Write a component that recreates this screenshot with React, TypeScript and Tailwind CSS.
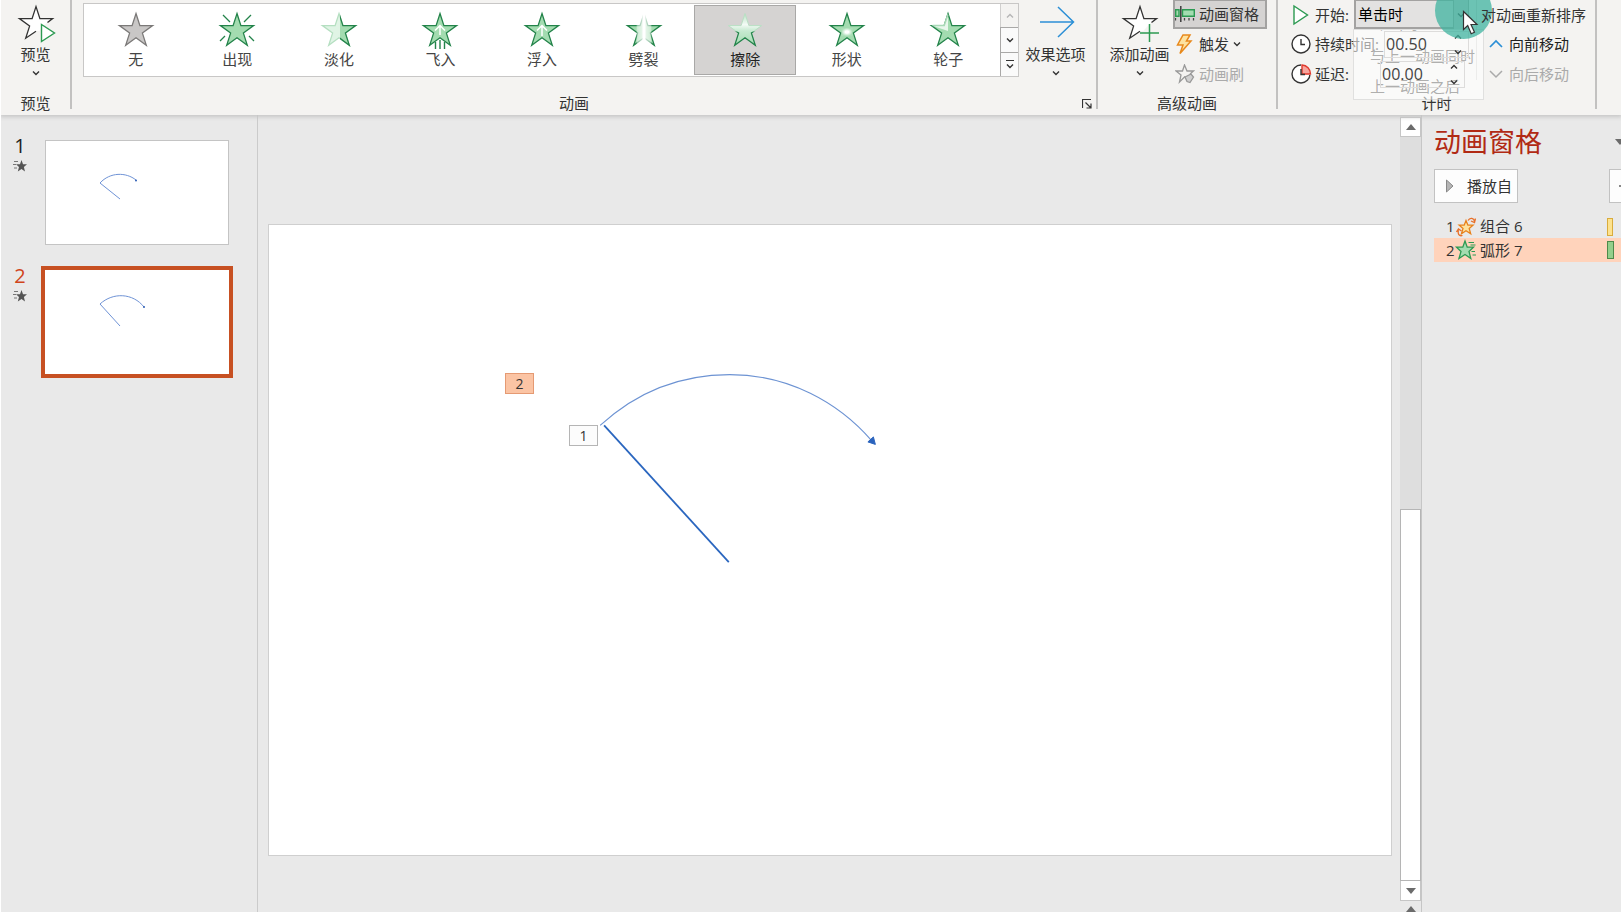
import { ReactNode, useState } from "react";

const STAR =
  "M20 2.5 23.9 14.6H36.6L26.4 22.1 30.3 34.2 20 26.7 9.7 34.2 13.6 22.1 3.4 14.6H16.1Z";

type StarKind = "none" | "appear" | "fade" | "fly" | "float" | "split" | "wipe" | "shape" | "wheel";

const effects: { kind: StarKind; label: string }[] = [
  { kind: "none", label: "无" },
  { kind: "appear", label: "出现" },
  { kind: "fade", label: "淡化" },
  { kind: "fly", label: "飞入" },
  { kind: "float", label: "浮入" },
  { kind: "split", label: "劈裂" },
  { kind: "wipe", label: "擦除" },
  { kind: "shape", label: "形状" },
  { kind: "wheel", label: "轮子" },
];

function EffectStar({ kind }: { kind: StarKind }) {
  const line = "#23834a";
  const fill = "#a3dcb0";
  const base = <path d={STAR} fill={fill} stroke={line} strokeWidth="1.3" />;
  return (
    <svg viewBox="0 0 40 40" className="h-10 w-10 shrink-0 overflow-visible" aria-hidden="true">
      <defs>
        <linearGradient id="g-split">
          <stop offset="0.3" stopColor="#fff" stopOpacity="0" />
          <stop offset="0.34" stopColor="#fff" stopOpacity="0.5" />
          <stop offset="0.44" stopColor="#fff" stopOpacity="0.7" />
          <stop offset="0.48" stopColor="#fff" />
          <stop offset="0.52" stopColor="#fff" />
          <stop offset="0.56" stopColor="#fff" stopOpacity="0.7" />
          <stop offset="0.66" stopColor="#fff" stopOpacity="0.5" />
          <stop offset="0.7" stopColor="#fff" stopOpacity="0" />
        </linearGradient>
        <linearGradient id="g-wipe" x1="0" y1="0" x2="0" y2="1">
          <stop offset="0" stopColor="#b9e3c3" />
          <stop offset="0.35" stopColor="#f4fbf6" />
          <stop offset="0.55" stopColor="#c6ead0" />
          <stop offset="1" stopColor="#a3dcb0" />
        </linearGradient>
        <radialGradient id="g-shape">
          <stop offset="0.3" stopColor="#fff" />
          <stop offset="1" stopColor="#fff" stopOpacity="0.1" />
        </radialGradient>
        <clipPath id="c-right"><path d="M21 0H40V40H21Z" /></clipPath>
        <clipPath id="c-low"><path d="M0 20.5H40V40H0Z" /></clipPath>
        <clipPath id="c-star"><path d={STAR} /></clipPath>
      </defs>
      {kind === "none" && <path d={STAR} fill="#c9c7c6" stroke="#7b7978" strokeWidth="1.3" />}
      {kind === "appear" && (
        <>
          {base}
          <path d="M6 4l7 7M34 4l-7 7M3 30l5-5M37 30l-5-5" stroke={line} strokeWidth="1.3" fill="none" />
        </>
      )}
      {kind === "fade" && (
        <>
          <path d={STAR} fill="#e0f4e5" stroke="#b5dfc1" strokeWidth="1.3" />
          <g clipPath="url(#c-right)">{base}</g>
        </>
      )}
      {kind === "fly" && (
        <>
          {base}
          <path d="M20 24V15M15 19.500l5-5 5 5" stroke="#fff" strokeWidth="1.5" fill="none" />
          <path d="M15.500 31v7M20 29v9M24.500 31v7" stroke={line} strokeWidth="1.4" />
        </>
      )}
      {kind === "float" && (
        <>
          {base}
          <path d="M20 25V15M15 19.500l5-5 5 5" stroke="#fff" strokeWidth="1.5" fill="none" />
        </>
      )}
      {kind === "split" && (
        <>
          {base}
          <path d="M0 0H40V40H0Z" fill="url(#g-split)" />
        </>
      )}
      {kind === "wipe" && (
        <>
          <path d={STAR} fill="url(#g-wipe)" stroke="#b9dfc4" strokeWidth="1" />
          <g clipPath="url(#c-low)">
            <path d={STAR} fill="none" stroke={line} strokeWidth="1.3" />
          </g>
        </>
      )}
      {kind === "shape" && (
        <>
          {base}
          <rect x="14.5" y="17" width="11" height="8" fill="url(#g-shape)" />
        </>
      )}
      {kind === "wheel" && (
        <>
          {base}
          <g clipPath="url(#c-star)">
            <path d="M20 20V0H2V14Z" fill="#e8f6ec" />
          </g>
          <path d="M20 3.500 16.200 14.600H4.500" stroke="#a9d9b7" strokeWidth="1.500" fill="none" />
        </>
      )}
    </svg>
  );
}

function Chevron({ up, className }: { up?: boolean; className?: string }) {
  return (
    <svg viewBox="0 0 8 6" className={className ?? "h-1.5 w-2 text-[#333]"} aria-hidden="true">
      <path d={up ? "M1 4.500 4 1.500 7 4.500" : "M1 1.500 4 4.500 7 1.500"} fill="none" stroke="currentColor" strokeWidth="1.4" />
    </svg>
  );
}

function Triangle({ up }: { up?: boolean }) {
  return (
    <svg viewBox="0 0 10 6" className="h-1.5 w-2.5 shrink-0" aria-hidden="true">
      <path d={up ? "M0 6 5 0 10 6Z" : "M0 0H10L5 6Z"} fill="#6b6b6b" />
    </svg>
  );
}

function OpenStar({ children }: { children: ReactNode }) {
  return (
    <svg viewBox="0 0 40 40" className="h-10 w-10 overflow-visible" aria-hidden="true">
      <path
        d="M23.500 26.700 20 26.700 9.700 34.200 13.600 22.100 3.400 14.600H16.100L20 2.500 23.900 14.600H36.600L30 19.500"
        fill="#fff"
      />
      <path
        d="M20 27.200 9.700 34.200 13.600 22.100 3.400 14.600H16.100L20 2.500 23.900 14.600H36.600L31.500 18.500"
        fill="none"
        stroke="#333"
        strokeWidth="1.300"
      />
      {children}
    </svg>
  );
}

function Group({ label, className, children }: { label: string; className: string; children: ReactNode }) {
  return (
    <section aria-label={label} className={`mb-1.5 flex flex-col border-r-2 border-[#c2c1c0] ${className}`}>
      <div className="flex h-[97px] shrink-0">{children}</div>
      <div className="flex h-3 items-center justify-center">{label}</div>
    </section>
  );
}

function Clock({ delayed }: { delayed?: boolean }) {
  return (
    <svg viewBox="0 0 22 22" className="h-[22px] w-[22px] shrink-0" aria-hidden="true">
      <circle cx="11" cy="11" r="9" fill="#fff" stroke="#333" strokeWidth="1.4" />
      {delayed && (
        <>
          <path d="M11 0H22V12H11Z" fill="#f4f3f1" />
          <path d="M12 2A9 9 0 0 1 20.500 11H12Z" fill="#f7a59e" stroke="#e03a2e" strokeWidth="1.4" />
        </>
      )}
      <path d="M11 6V11.500H15" fill="none" stroke="#333" strokeWidth="1.4" />
    </svg>
  );
}

function Spinner({ id, value, className }: { id: string; value: string; className: string }) {
  return (
    <div className={`relative z-10 flex h-[27px] items-center border border-[#dddcdb] ${className}`}>
      <input id={id} defaultValue={value} className="h-full w-full min-w-0 bg-transparent pl-px text-base text-[#444] outline-none" />
      <div className="flex h-full w-5 shrink-0 flex-col items-center justify-between py-0.5">
        <button aria-label="增加" className="flex"><Chevron up /></button>
        <button aria-label="减少" className="flex"><Chevron /></button>
      </div>
    </div>
  );
}

function SmallStar() {
  return (
    <svg viewBox="0 0 14 12" className="h-3 w-3.5 shrink-0" aria-hidden="true">
      <path d="M8.500 0 10 4.200H14L10.900 7 12 11.500 8.500 8.900 4.800 11.500 6 7 3 4.200H7Z" fill="#555" />
      <path d="M1 1.500H5M0 4.500H3M1 8H4" stroke="#777" strokeWidth="1" />
    </svg>
  );
}

function Ribbon() {
  const [selected, setSelected] = useState<StarKind>("wipe");
  return (
    <header className="relative z-10 flex h-[115px] shrink-0 bg-[#f4f3f1] text-[15px] leading-5 text-[#333] shadow-[0_1px_4px_1px_#c6c6c6]">
      <Group label="预览" className="w-[71px] shrink-0">
        <button className="flex w-full flex-col items-center self-start pt-1">
          <OpenStar>
            <path d="M25.500 20.500V37.500L38.500 29Z" fill="#fff" stroke="#2c9a52" strokeWidth="1.400" />
          </OpenStar>
          <span>预览</span>
          <span className="pt-1.5"><Chevron /></span>
        </button>
      </Group>

      <section aria-label="动画" className="relative mb-1.5 flex min-w-0 flex-1 flex-col border-r-2 border-[#c2c1c0]">
        <div className="flex h-[97px] shrink-0">
          <div className="ml-[11px] mt-[3px] flex h-[74px] min-w-0 flex-1 border border-[#c8c7c6] bg-white">
            <div className="flex min-w-0 flex-1 px-px py-px">
              {effects.map((e) => (
                <button
                  key={e.kind}
                  aria-pressed={selected === e.kind}
                  onClick={() => setSelected(e.kind)}
                  className={
                    selected === e.kind
                      ? "flex min-w-0 flex-1 flex-col items-center border border-[#a9a8a7] bg-[#d5d3d2] pt-[5px] text-[#222]"
                      : "flex min-w-0 flex-1 flex-col items-center border border-transparent pt-[5px] text-[#444]"
                  }
                >
                  <EffectStar kind={e.kind} />
                  <span className="-mt-0.5">{e.label}</span>
                </button>
              ))}
            </div>
            <div className="flex w-[18px] shrink-0 flex-col">
              <button aria-label="上一行" className="flex flex-1 items-center justify-center border-l border-[#d0cfce] bg-[#f4f3f1]">
                <Chevron up className="h-1.5 w-2 text-[#b5b5b5]" />
              </button>
              <button aria-label="下一行" className="flex flex-1 items-center justify-center border border-r-0 border-[#a9a8a7] bg-[#fafafa]">
                <Chevron />
              </button>
              <button aria-label="更多效果" className="flex flex-1 flex-col items-center justify-center gap-0.5 border-l border-[#a9a8a7] bg-[#fafafa]">
                <span className="h-px w-2 bg-[#333]" />
                <Chevron />
              </button>
            </div>
          </div>
          <button className="flex w-[77px] shrink-0 flex-col items-center self-start pt-1 pr-1">
            <svg viewBox="0 0 40 40" className="h-10 w-10" aria-hidden="true">
              <path d="M4 18H37M22 3 37.500 18 22 33" fill="none" stroke="#2b8fd6" strokeWidth="1.500" />
            </svg>
            <span>效果选项</span>
            <span className="pt-1.5"><Chevron /></span>
          </button>
        </div>
        <div className="flex h-3 items-center justify-center pr-5">动画</div>
        <button aria-label="动画对话框" className="absolute right-1 bottom-0 flex">
          <svg viewBox="0 0 10 10" className="h-2.5 w-2.5" aria-hidden="true">
            <path d="M.5 9V.5H9M3.500 3.500 9 9M9 4.500V9H4.500" fill="none" stroke="#333" strokeWidth="1.200" />
          </svg>
        </button>
      </section>

      <Group label="高级动画" className="w-[180px] shrink-0">
        <button className="flex w-[75px] shrink-0 flex-col items-center self-start pt-1 pl-2">
          <OpenStar>
            <path d="M29.500 20V38M20 29H39" stroke="#2c9a52" strokeWidth="1.500" />
          </OpenStar>
          <span className="whitespace-nowrap">添加动画</span>
          <span className="pt-1.5"><Chevron /></span>
        </button>
        <div className="flex flex-1 flex-col items-start">
          <button className="flex h-[29px] w-[94px] items-center gap-1 border-2 border-t border-[#a3a2a1] bg-[#d5d3d2]">
            <svg viewBox="0 0 20 18" className="h-[18px] w-5 shrink-0" aria-hidden="true">
              <path d="M.7 4.700H4V11.300H.7ZM7.500 4.700H19.300V11.300H7.500Z" fill="#a3dcb0" stroke="#2c9a52" strokeWidth="1.400" />
              <path d="M5.800 1V17" stroke="#333" strokeWidth="1.400" />
              <path d="M.5 13V15.500M9.500 13V15.500M14 13V15.500M18.500 13V15.500" stroke="#444" strokeWidth="1.300" />
            </svg>
            <span className="whitespace-nowrap">动画窗格</span>
          </button>
          <button className="flex h-[30px] items-center gap-1 pl-0.5">
            <svg viewBox="0 0 20 22" className="h-[22px] w-5" aria-hidden="true">
              <path d="M8 2H15L11.500 8H16L5 20.500 8 12H2.500Z" fill="#fde2a0" stroke="#e8891c" strokeWidth="1.500" />
            </svg>
            <span>触发</span>
            <Chevron />
          </button>
          <button disabled className="flex h-[30px] items-center gap-1 pl-0.5 text-[#aaa]">
            <svg viewBox="0 0 20 20" className="h-5 w-5" aria-hidden="true">
              <path d="M10 12.500 4.500 18 6 11 1 7H7.500L9.500 1 12 7H18.500L15 10" fill="none" stroke="#999" strokeWidth="1.300" />
              <path d="M10 13 16 10 18.500 13 15 18.500 12 17.500Z" fill="#d0d0d0" stroke="#999" strokeWidth="1.300" />
            </svg>
            <span>动画刷</span>
          </button>
        </div>
      </Group>

      <Group label="计时" className="relative w-[319px] shrink-0">
        <div className="mr-[7px] flex w-[191px] shrink-0 flex-col pl-3">
          <div className="flex h-[29px] items-center gap-[3px]">
            <svg viewBox="0 0 22 22" className="h-[22px] w-[22px] shrink-0" aria-hidden="true">
              <path d="M4 2V20L17.500 11Z" fill="#fff" stroke="#2c9a52" strokeWidth="1.400" />
            </svg>
            <label htmlFor="start" className="w-9 shrink-0 whitespace-nowrap">开始:</label>
            <div className="relative flex h-full flex-1 items-center">
              <select
                id="start"
                className="h-full w-full appearance-none border-2 border-t border-[#a3a2a1] bg-[#e3e2e1] pl-0.5 text-[15px] text-black outline-none"
              >
                <option>单击时</option>
                <option>与上一动画同时</option>
                <option>上一动画之后</option>
              </select>
              <span className="pointer-events-none absolute right-0 flex h-full w-4 items-center justify-center border-x border-[#a3a2a1] bg-[#cfcecd]">
                <Chevron />
              </span>
            </div>
          </div>
          <div className="flex h-[30px] items-center gap-[3px]">
            <Clock />
            <label htmlFor="duration" className="flex-1 whitespace-nowrap">持续时间:</label>
            <Spinner id="duration" value="00.50" className="w-[85px]" />
          </div>
          <div className="flex h-[30px] items-center gap-[3px]">
            <Clock delayed />
            <label htmlFor="delay" className="flex-1">延迟:</label>
            <Spinner id="delay" value="00.00" className="mr-1 w-[85px]" />
          </div>
        </div>
        <div className="h-20 w-px shrink-0 bg-[#d5d4d3]" />
        <div className="relative z-20 flex flex-1 flex-col items-start pl-1">
          <span className="flex h-[29px] items-center whitespace-nowrap">对动画重新排序</span>
          <button className="flex h-[30px] items-center gap-1.5 pl-2 text-[#222]">
            <svg viewBox="0 0 14 10" className="h-2.5 w-3.5" aria-hidden="true">
              <path d="M1 8 7 2 13 8" fill="none" stroke="#2b8fd6" strokeWidth="1.700" />
            </svg>
            向前移动
          </button>
          <button disabled className="flex h-[30px] items-center gap-1.5 pl-2 text-[#aaa]">
            <svg viewBox="0 0 14 10" className="h-2.5 w-3.5" aria-hidden="true">
              <path d="M1 2 7 8 13 2" fill="none" stroke="#aaa" strokeWidth="1.500" />
            </svg>
            向后移动
          </button>
        </div>
        {/* Drop-down list while it fades out */}
        <ul className="pointer-events-none absolute top-[29px] left-[75px] h-[71px] w-[131px] overflow-hidden border border-[#77777733] bg-white/55 pl-4 whitespace-nowrap text-[#33333366]">
          <li className="-mt-[17px] h-[33px]">&nbsp;单击时</li>
          <li className="h-[30px]">与上一动画同时</li>
          <li className="h-[30px]">上一动画之后</li>
        </ul>
        {/* Click highlight and pointer */}
        <div className="pointer-events-none absolute -top-[18px] left-[157px] z-10 h-[57px] w-[57px] rounded-full bg-[#3fb39f]/75" />
        <svg viewBox="0 0 18 26" className="pointer-events-none absolute top-[10px] left-[184px] z-30 h-[26px] w-[18px]" aria-hidden="true">
          <path d="M1.500 1.500V19.500L5.700 15.600 9.200 23.800 12.500 22.300 9 14.500H15Z" fill="#fff" stroke="#333" strokeWidth="1.200" />
        </svg>
      </Group>
      <div className="w-6 shrink-0" />
    </header>
  );
}

function Thumbnails() {
  const stroke = "#6f93d6";
  return (
    <nav aria-label="幻灯片" className="flex w-[257px] shrink-0 flex-col gap-[21px] border-r border-[#cbcbcb] pt-[25px] pl-3">
      <div className="flex gap-[18px]">
        <div className="-mt-1 flex w-3.5 flex-col items-center text-xl leading-5 text-[#222]">
          <span className="h-6">1</span>
          <SmallStar />
        </div>
        <button aria-label="幻灯片 1" className="h-[105px] w-[184px] border border-[#c4c4c4] bg-white">
          <svg viewBox="0 0 182 103" className="h-full w-full" aria-hidden="true">
            <path d="M74 58 54 42C64 31 80 31 90 39" fill="none" stroke={stroke} strokeWidth="1" />
            <circle cx="90" cy="39.500" r="1" fill="#2f5fb5" />
          </svg>
        </button>
      </div>
      <div className="flex gap-3.5">
        <div className="flex w-3.5 flex-col items-center text-xl leading-5 text-[#d0451b]">
          <span className="h-6">2</span>
          <SmallStar />
        </div>
        <button aria-label="幻灯片 2" className="h-[112px] w-[192px] border-4 border-[#c75022] bg-white">
          <svg viewBox="0 0 184 104" className="h-full w-full" aria-hidden="true">
            <path d="M75 56 55 34C68 22 88 23 99 37" fill="none" stroke={stroke} strokeWidth="1" />
            <circle cx="99" cy="37" r="1" fill="#2f5fb5" />
          </svg>
        </button>
      </div>
    </nav>
  );
}

function Editor() {
  return (
    <main className="min-w-0 flex-1 pt-[109px] pr-2 pl-2.5">
      <div className="relative aspect-video w-full border border-[#cfcfcf] bg-white">
        <svg viewBox="0 0 1123 632" className="h-full w-full" aria-label="弧形和直线">
          <path d="M331 201C368 167 413 150 461 150 520 150 570 178 603 216" fill="none" stroke="#6d93d3" strokeWidth="1.100" />
          <path d="M607 220 599.500 217.500 605 212.500Z" fill="#2a63bd" stroke="#2a63bd" />
          <path d="M335 201 460 338" stroke="#2a66bf" strokeWidth="1.800" />
        </svg>
        <span className="absolute top-[148px] left-[236px] flex h-[21px] w-[29px] items-center justify-center border border-[#e59a73] bg-[#fbc4a4] text-sm text-[#333]">2</span>
        <span className="absolute top-[200px] left-[300px] flex h-[21px] w-[29px] items-center justify-center border border-[#b5b5b5] bg-[#fcfcfc] text-sm text-[#333]">1</span>
      </div>
    </main>
  );
}

function ScrollBar() {
  return (
    <div className="flex w-[22px] shrink-0 flex-col border-r border-[#c6c6c6] bg-[#dedede] pt-[2px]">
      <button aria-label="向上滚动" className="flex h-5 shrink-0 items-center justify-center border border-[#c6c6c6] bg-white"><Triangle up /></button>
      <div className="min-h-0 flex-1" />
      <div className="h-[372px] shrink-0 border border-[#b5b5b5] bg-white" />
      <button aria-label="向下滚动" className="flex h-5 shrink-0 items-center justify-center border border-t-0 border-[#c6c6c6] bg-white"><Triangle /></button>
      <button aria-label="上一张幻灯片" className="flex h-[11px] shrink-0 items-end justify-center bg-[#e9e9e9]"><Triangle up /></button>
    </div>
  );
}

function AnimationPane() {
  return (
    <aside className="flex w-[199px] shrink-0 flex-col overflow-hidden pl-3 text-[15px] text-[#333]">
      <div className="flex h-[54px] items-center justify-between">
        <h2 className="text-[27px] leading-8 text-[#b12a14]">动画窗格</h2>
        <button aria-label="窗格选项" className="-mr-1 flex"><Triangle /></button>
      </div>
      <div className="flex justify-between">
        <button className="flex h-[34px] w-[84px] items-center gap-3 border border-[#c2c2c2] bg-[#fdfdfd] pl-2.5">
          <svg viewBox="0 0 9 14" className="h-3.5 w-2.5 shrink-0" aria-hidden="true">
            <path d="M1 1V13L7.500 7Z" fill="#b5b5b5" stroke="#888" />
          </svg>
          <span className="whitespace-nowrap">播放自</span>
        </button>
        <button aria-label="上移" className="flex h-[34px] w-3 items-center justify-end border border-r-0 border-[#c2c2c2] bg-[#fdfdfd]">
          <span className="h-0.5 w-0.5 bg-[#888]" />
        </button>
      </div>
      <ol className="mt-3">
        <li className="flex h-[23px] items-center pl-3">
          <span className="w-2.5">1</span>
          <svg viewBox="0 0 20 20" className="h-5 w-5" aria-hidden="true">
            <path d="M10 3.500 11.900 8.200H17L13.200 11.500 14.700 16.800 10 13.800 5.500 16.800 7 11.500 3.200 8.200H8.200Z" fill="#fde2a0" stroke="#e8821c" strokeWidth="1.300" />
            <path d="M12 3.500C14 0 18 1 18.500 4.500M19.500 1.500 18.500 5.500 15 4M6.500 18.500C3 19.500 1.500 17 2.500 13M.5 15 2.500 12 5.500 14" fill="none" stroke="#e8702a" strokeWidth="1.300" />
          </svg>
          <span className="ml-1 flex-1">组合 6</span>
          <span className="mr-2 h-[18px] w-1.5 border border-[#d9ac3c] bg-[#fde28e]" />
        </li>
        <li className="flex h-6 items-center bg-[#ffd3bb] pl-3">
          <span className="w-2.5">2</span>
          <svg viewBox="0 0 20 20" className="h-5 w-5 overflow-visible" aria-hidden="true">
            <path d="M9 1 11.200 7.200H17.500L13 11.500 14.800 18.500 9 14.500 3 18.500 5 11.500 .5 7.200H6.800Z" fill="#a3dcb0" stroke="#2c9a52" strokeWidth="1.300" />
            <path d="M12.500 2.500H18M14.500 5H19.500M15.500 11.500H19M16.500 15H20" stroke="#2c9a52" strokeWidth="1.200" />
          </svg>
          <span className="ml-1 flex-1">弧形 7</span>
          <span className="mr-[7px] h-[18px] w-[7px] border border-[#4d8a4a] bg-[#93cf8b]" />
        </li>
      </ol>
    </aside>
  );
}

export default function App() {
  return (
    <div className="flex h-screen flex-col overflow-hidden border-x border-white bg-[#e9e9e9] font-['Open_Sans','Noto_Sans_CJK_SC',sans-serif]">
      <Ribbon />
      <div className="flex min-h-0 flex-1">
        <Thumbnails />
        <Editor />
        <ScrollBar />
        <AnimationPane />
      </div>
    </div>
  );
}
